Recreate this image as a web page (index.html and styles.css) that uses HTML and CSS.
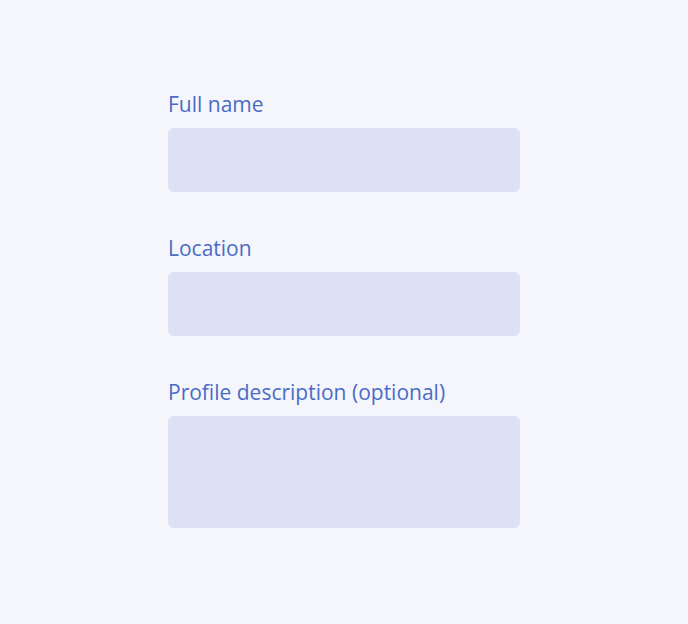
FILE: index.html
```html
<!DOCTYPE html>
<html lang="en">
<head>
    <meta charset="UTF-8">
    <meta name="viewport" content="width=device-width, initial-scale=1.0">
    <title>Profile</title>
    <link rel="stylesheet" href="styles.css">
</head>
<body>
    <form class="profile-form">
        <div class="form-group">
            <label for="full-name" class="form-label">Full name</label>
            <input type="text" id="full-name" class="input-field">
        </div>
        <div class="form-group">
            <label for="location" class="form-label">Location</label>
            <input type="text" id="location" class="input-field">
        </div>
        <div class="form-group">
            <label for="description" class="form-label">Profile description (optional)</label>
            <textarea id="description" class="input-field text-area"></textarea>
        </div>
    </form>
</body>
</html>
```

FILE: styles.css
```css
body {
    margin: 0;
    background-color: #f5f6fb;
    font-family: "Open Sans", sans-serif;
}
.profile-form {
    width: 352px;
    margin-left: 168px;
    padding-top: 88px;
}
.form-group {
    display: flex;
    flex-direction: column;
    margin-bottom: 40px;
}
.form-label {
    font-size: 21px;
    line-height: 32px;
    color: #4a6cc6;
    margin-bottom: 8px;
}
.input-field {
    box-sizing: border-box;
    height: 64px;
    border: none;
    border-radius: 6px;
    background-color: #dce2f3;
    padding: 0 12px;
    font-size: 18px;
    outline: none;
}
.text-area {
    height: 112px;
    resize: none;
    padding: 12px;
}
```
